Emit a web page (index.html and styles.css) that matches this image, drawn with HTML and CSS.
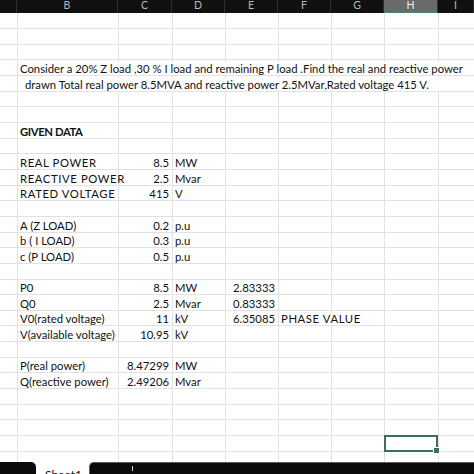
FILE: index.html
```html
<!DOCTYPE html>
<html>
<head>
<meta charset="utf-8">
<link rel="stylesheet" href="styles.css">
</head>
<body>
<div class="app">
  <div class="hdr">
    <div class="hc"></div>
    <div class="hc">B</div>
    <div class="hc">C</div>
    <div class="hc">D</div>
    <div class="hc">E</div>
    <div class="hc">F</div>
    <div class="hc">G</div>
    <div class="hc hsel">H</div>
    <div class="hc">I</div>
  </div>
  <div class="sheet">
    <div class="row first"></div>
    <div class="row"></div>
    <div class="row"></div>
    <div class="row"><div class="wide">Consider a 20% Z load ,30 % I load and remaining P load .Find the real and reactive power</div></div>
    <div class="row"><div class="wide indent">drawn Total real power 8.5MVA and reactive power 2.5MVar,Rated voltage 415 V.</div></div>
    <div class="row"></div>
    <div class="row"></div>
    <div class="row"><div class="b bold">GIVEN DATA</div></div>
    <div class="row"></div>
    <div class="row"><div class="b caps">REAL POWER</div><div class="c">8.5</div><div class="d">MW</div></div>
    <div class="row"><div class="b caps">REACTIVE POWER</div><div class="c">2.5</div><div class="d">Mvar</div></div>
    <div class="row"><div class="b caps">RATED VOLTAGE</div><div class="c">415</div><div class="d">V</div></div>
    <div class="row"></div>
    <div class="row"><div class="b">A (Z LOAD)</div><div class="c">0.2</div><div class="d">p.u</div></div>
    <div class="row"><div class="b">b ( I LOAD)</div><div class="c">0.3</div><div class="d">p.u</div></div>
    <div class="row"><div class="b">c (P LOAD)</div><div class="c">0.5</div><div class="d">p.u</div></div>
    <div class="row"></div>
    <div class="row"><div class="b">P0</div><div class="c">8.5</div><div class="d">MW</div><div class="e">2.83333</div></div>
    <div class="row"><div class="b">Q0</div><div class="c">2.5</div><div class="d">Mvar</div><div class="e">0.83333</div></div>
    <div class="row"><div class="b">V0(rated voltage)</div><div class="c">11</div><div class="d">kV</div><div class="e">6.35085</div><div class="fg caps">PHASE VALUE</div></div>
    <div class="row"><div class="b">V(available voltage)</div><div class="c">10.95</div><div class="d">kV</div></div>
    <div class="row"></div>
    <div class="row"><div class="b">P(real power)</div><div class="c">8.47299</div><div class="d">MW</div></div>
    <div class="row"><div class="b">Q(reactive power)</div><div class="c">2.49206</div><div class="d">Mvar</div></div>
    <div class="row"></div>
    <div class="row"></div>
    <div class="row"></div>
    <div class="row"><div class="h sel"></div></div>
    <div class="row last"></div>
  </div>
  <div class="tabs">
    <div class="tab-l"></div>
    <div class="tab-sheet">Sheet1</div>
    <div class="tab-r"><span class="tick"></span></div>
  </div>
</div>
</body>
</html>
```

FILE: styles.css
```css
html, body {
  margin: 0;
  padding: 0;
  background: #ffffff;
}

.app {
  width: 474px;
  height: 474px;
  overflow: hidden;
  display: flex;
  flex-direction: column;
  font-family: "Lato", "Liberation Sans", sans-serif;
  font-size: 11.3px;
  color: #111111;
}

.hdr {
  display: grid;
  grid-template-columns: 17px 101px 54px 53px 53px 53px 53px 54px 36px;
  height: 13px;
  flex: none;
  background: #101010;
}

.hc {
  box-sizing: border-box;
  border-right: 1px solid #2e2e2e;
  color: #b8b8b8;
  font-size: 10.5px;
  line-height: 10px;
  text-align: center;
}

.hsel {
  background: #6a6a6a;
  color: #eeeeee;
  border-bottom: 1px solid #3f8f63;
}

.sheet {
  flex: none;
  height: 449px;
  overflow: hidden;
  background-image:
    linear-gradient(#e2e2e2, #e2e2e2),
    linear-gradient(#e2e2e2, #e2e2e2),
    linear-gradient(#e2e2e2, #e2e2e2),
    linear-gradient(#e2e2e2, #e2e2e2),
    linear-gradient(#e2e2e2, #e2e2e2),
    linear-gradient(#e2e2e2, #e2e2e2),
    linear-gradient(#e2e2e2, #e2e2e2),
    linear-gradient(#e2e2e2, #e2e2e2);
  background-size: 1px 100%;
  background-repeat: no-repeat;
  background-position: 17px 0, 118px 0, 172px 0, 225px 0, 278px 0, 331px 0, 384px 0, 438px 0;
}

.row {
  display: grid;
  grid-template-columns: 17px 101px 54px 53px 53px 53px 53px 54px 36px;
  height: 15.67px;
  box-sizing: border-box;
  border-bottom: 1px solid #e2e2e2;
  align-items: end;
}

.row.first {
  height: 16px;
}

.row.last {
  height: 12px;
  border-bottom: none;
}

.row > div {
  white-space: nowrap;
  line-height: 13px;
  height: 13px;
  overflow: visible;
}

.b {
  grid-column: 2;
  padding-left: 3px;
}

.bold {
  font-weight: 700;
  letter-spacing: -0.4px;
}

.caps {
  letter-spacing: 0.6px;
}

.c {
  grid-column: 3;
  text-align: right;
  padding-right: 3px;
}

.d {
  grid-column: 4;
  padding-left: 3px;
}

.e {
  grid-column: 5;
  text-align: right;
  padding-right: 3px;
}

.fg {
  grid-column: 6 / 8;
  padding-left: 2px;
  margin-left: 1px;
  background: #ffffff;
}

.wide {
  grid-column: 2 / 10;
  margin-left: 1px;
  padding-left: 2px;
  background: #ffffff;
}

.wide.indent {
  padding-left: 7px;
}

.h {
  grid-column: 8;
}

.sel {
  position: relative;
  box-sizing: border-box;
  height: 17px !important;
  margin-top: -1px;
  border: 2px solid #3f6e58;
  align-self: stretch;
}

.sel::after {
  content: "";
  position: absolute;
  right: -4px;
  bottom: -4px;
  width: 5px;
  height: 5px;
  background: #3f6e58;
  border: 1px solid #ffffff;
}

.tabs {
  flex: none;
  height: 12px;
  display: flex;
  background: #ffffff;
}

.tab-l {
  width: 36px;
  background: #0a0a0a;
  border-top-right-radius: 5px;
}

.tab-sheet {
  width: 53px;
  padding-left: 9px;
  box-sizing: border-box;
  font-size: 12px;
  line-height: 14px;
  padding-top: 6px;
  color: #111111;
  overflow: hidden;
  white-space: nowrap;
}

.tab-r {
  flex: 1;
  background: #0a0a0a;
  border-top-left-radius: 5px;
  border-top: 1px solid #5a5a5a;
  border-left: 1px solid #5a5a5a;
  display: flex;
}

.tick {
  display: block;
  width: 1px;
  height: 5px;
  margin-left: 42px;
  margin-top: 3px;
  background: #cfcfcf;
}
```
